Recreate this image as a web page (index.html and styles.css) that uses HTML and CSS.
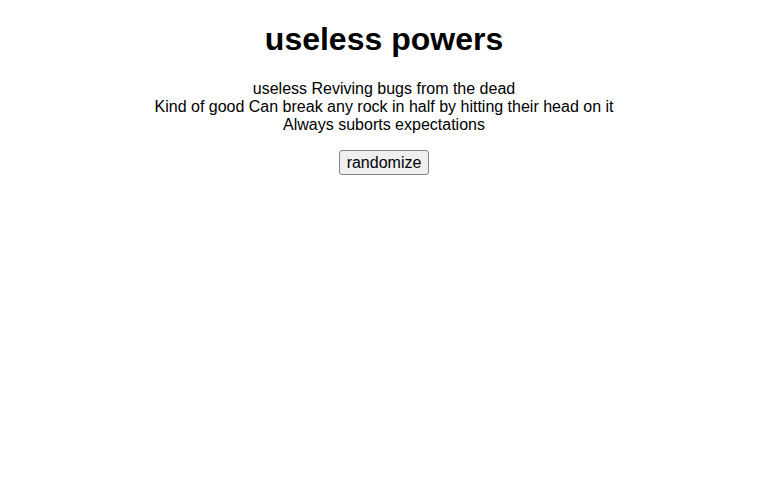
FILE: index.html
```html
<!DOCTYPE html>
<html lang="en">
<head>
  <meta charset="UTF-8" />
  <meta name="viewport" content="width=device-width, initial-scale=1.0"/>
  <title>useless powers</title>
  <link rel="stylesheet" href="styles.css">
</head>
<body>

  <div class="container">
    <h1>useless powers</h1>
    <p id="powers">
      useless Reviving bugs from the dead<br>
      Kind of good Can break any rock in half by hitting their head on it<br>
      Always suborts expectations
    </p>
    <button id="randomBtn">randomize</button>
  </div>

</body>
</html>
```

FILE: styles.css
```css
body {
  margin: 0;
  font-family: "Liberation Sans", Arial, sans-serif;
  color: #000;
  background-color: #fff;
}

.container {
  text-align: center;
}

.container h1 {
  font-size: 32px;
  margin: 21px 0 22px;
}

.container p {
  font-size: 16px;
  line-height: 18px;
  margin: 0 0 16px;
}

#randomBtn {
  font-family: "Liberation Sans", Arial, sans-serif;
  font-size: 16px;
  padding: 1px 7px;
  height: 25px;
  color: #000;
  background-color: #efefef;
  border: 1px solid #858585;
  border-radius: 3px;
}
```
